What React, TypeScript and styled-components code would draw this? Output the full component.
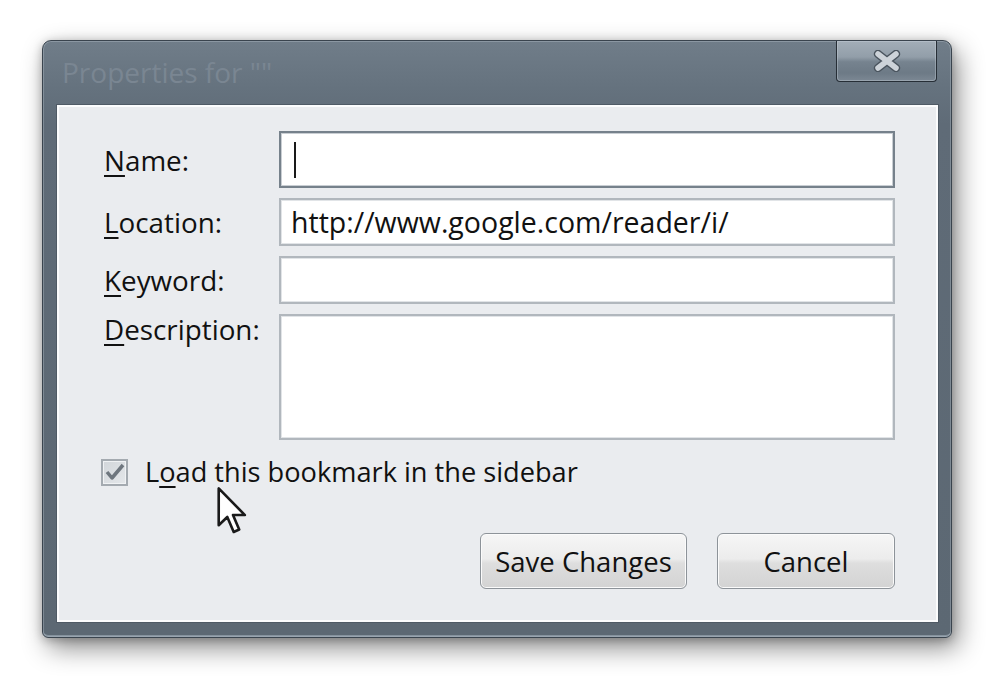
import React from 'react'
import styled, { createGlobalStyle } from 'styled-components'

const GlobalStyle = createGlobalStyle`
  html, body {
    margin: 0;
    padding: 0;
    background: #ffffff;
  }
  body {
    font-family: "Open Sans", "Noto Sans", "DejaVu Sans", sans-serif;
  }
`

const Page = styled.div`
  position: relative;
  width: 1000px;
  height: 682px;
  box-sizing: border-box;
  padding: 40px 48px 0 42px;
  overflow: hidden;
`

const Window = styled.div`
  width: 910px;
  box-sizing: border-box;
  display: flex;
  flex-direction: column;
  border: 1px solid #3a444e;
  border-radius: 9px 9px 6px 6px;
  background: linear-gradient(180deg, #707d89 0%, #65727e 8%, #5f6b77 14%, #5c6873 100%);
  box-shadow:
    inset 0 0 0 1px rgba(190, 200, 210, 0.35),
    inset 0 -2px 0 rgba(170, 182, 193, 0.55),
    6px 10px 26px rgba(0, 0, 0, 0.45),
    0 2px 10px rgba(0, 0, 0, 0.25);
`

const TitleBar = styled.div`
  height: 64px;
  display: flex;
  align-items: flex-start;
  justify-content: space-between;
`

const Title = styled.div`
  padding: 13px 0 0 19px;
  font-size: 28px;
  line-height: 36px;
  color: #7a8692;
`

const CloseButton = styled.button`
  width: 101px;
  height: 41px;
  margin-right: 14px;
  padding: 0;
  display: flex;
  align-items: center;
  justify-content: center;
  border: 1px solid #262e36;
  border-top: none;
  border-radius: 0 0 4px 4px;
  background: linear-gradient(180deg, #a3aeb8 0%, #929ea9 40%, #76838f 52%, #6d7a86 80%, #7c8894 100%);
  box-shadow: inset 0 0 0 1px rgba(210, 218, 225, 0.35);
`

const ClientArea = styled.div`
  margin: 0 13px 15px 14px;
  box-sizing: border-box;
  display: flex;
  flex-direction: column;
  padding: 24px 41px 31px 45px;
  background: #eaecef;
  border: 2px solid #fbfcfd;
  box-shadow: 0 0 0 1px #4f5a65;
`

const Form = styled.div`
  display: grid;
  grid-template-columns: 175px 616px;
  grid-template-rows: 57px 48px 48px 126px;
  row-gap: 10px;
`

const Label = styled.label<{ top?: boolean }>`
  align-self: ${({ top }) => (top ? 'start' : 'center')};
  margin-top: ${({ top }) => (top ? '-3px' : '0')};
  font-size: 27.8px;
  line-height: 36px;
  color: #111111;
`

const Key = styled.span`
  text-decoration: underline;
  text-decoration-thickness: 2px;
  text-underline-offset: 4px;
`

const Field = styled.div<{ focused?: boolean }>`
  box-sizing: border-box;
  display: flex;
  align-items: center;
  padding: 0 10px;
  background: #ffffff;
  border: 2px solid ${({ focused }) => (focused ? '#76818b' : '#b1b7bd')};
  box-shadow: inset 0 0 0 1px ${({ focused }) => (focused ? '#c9ced3' : '#e1e4e7')};
  font-size: 28.5px;
  color: #111111;
`

const Caret = styled.span`
  width: 2px;
  height: 36px;
  margin-left: 3px;
  background: #1a1a1a;
`

const CheckRow = styled.div`
  display: flex;
  align-items: center;
  gap: 17px;
  margin-top: 18px;
  height: 28px;
`

const CheckBox = styled.span`
  width: 27px;
  height: 27px;
  margin-left: -3px;
  box-sizing: border-box;
  display: flex;
  align-items: center;
  justify-content: center;
  border: 2px solid #a4aab0;
  background: linear-gradient(135deg, #d2d6da 0%, #e4e7ea 100%);
  box-shadow: inset 0 0 0 1px #f0f2f4;
`

const CheckLabel = styled.span`
  font-size: 27.2px;
  line-height: 34px;
  color: #111111;
`

const ButtonRow = styled.div`
  display: flex;
  justify-content: flex-end;
  gap: 30px;
  margin-top: 47px;
`

const Button = styled.button<{ width: number }>`
  width: ${({ width }) => width}px;
  height: 56px;
  padding: 0;
  border: 1px solid #8d9399;
  border-radius: 6px;
  background: linear-gradient(180deg, #f6f6f6 0%, #ececec 46%, #dedede 54%, #d3d3d3 100%);
  box-shadow: inset 0 0 0 1px #fbfbfb;
  font-family: inherit;
  font-size: 27.5px;
  color: #111111;
`

const Pointer = styled.svg`
  position: absolute;
  left: 216px;
  top: 486px;
`

function CloseGlyph() {
  return (
    <svg width="30" height="22" viewBox="0 0 30 22">
      <g strokeLinecap="round" fill="none">
        <path d="M6 4 L24 18 M24 4 L6 18" stroke="#4a545e" strokeWidth="8.5" />
        <path d="M6 4 L24 18 M24 4 L6 18" stroke="#cdd3d9" strokeWidth="5.5" />
      </g>
    </svg>
  )
}

function CheckMark() {
  return (
    <svg width="20" height="18" viewBox="0 0 20 18">
      <path d="M2 9 L7 15 L18 2" stroke="#6e767e" strokeWidth="3.5" fill="none" strokeLinejoin="round" />
    </svg>
  )
}

export default function App() {
  return (
    <Page>
      <GlobalStyle />
      <Window>
        <TitleBar>
          <Title>Properties for ""</Title>
          <CloseButton aria-label="Close">
            <CloseGlyph />
          </CloseButton>
        </TitleBar>
        <ClientArea>
          <Form>
            <Label><Key>N</Key>ame:</Label>
            <Field focused><Caret /></Field>
            <Label><Key>L</Key>ocation:</Label>
            <Field>http://www.google.com/reader/i/</Field>
            <Label><Key>K</Key>eyword:</Label>
            <Field />
            <Label top><Key>D</Key>escription:</Label>
            <Field />
          </Form>
          <CheckRow>
            <CheckBox><CheckMark /></CheckBox>
            <CheckLabel>L<Key>o</Key>ad this bookmark in the sidebar</CheckLabel>
          </CheckRow>
          <ButtonRow>
            <Button width={207}>Save Changes</Button>
            <Button width={178}>Cancel</Button>
          </ButtonRow>
        </ClientArea>
      </Window>
      <Pointer width="34" height="50" viewBox="0 0 14 21">
        <path
          d="M1 1 L1 16.5 L4.6 13 L7.3 19.3 L9.6 18.3 L7 12.2 L12 12.2 Z"
          fill="#ffffff"
          stroke="#1a1a1a"
          strokeWidth="1.1"
          strokeLinejoin="round"
        />
      </Pointer>
    </Page>
  )
}
